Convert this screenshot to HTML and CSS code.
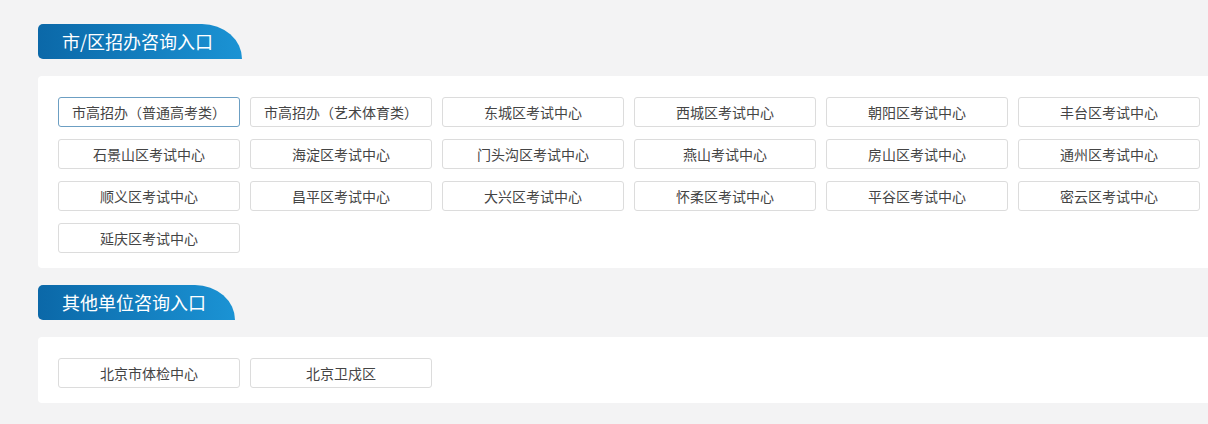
FILE: index.html
```html
<!DOCTYPE html>
<html lang="zh-CN">
<head>
<meta charset="utf-8">
<title>咨询入口</title>
<link rel="stylesheet" href="styles.css">
</head>
<body>
<div class="wrap">
  <div class="tab">市/区招办咨询入口</div>
  <div class="panel">
    <div class="grid">
      <a class="btn active">市高招办（普通高考类）</a>
      <a class="btn">市高招办（艺术体育类）</a>
      <a class="btn">东城区考试中心</a>
      <a class="btn">西城区考试中心</a>
      <a class="btn">朝阳区考试中心</a>
      <a class="btn">丰台区考试中心</a>
      <a class="btn">石景山区考试中心</a>
      <a class="btn">海淀区考试中心</a>
      <a class="btn">门头沟区考试中心</a>
      <a class="btn">燕山考试中心</a>
      <a class="btn">房山区考试中心</a>
      <a class="btn">通州区考试中心</a>
      <a class="btn">顺义区考试中心</a>
      <a class="btn">昌平区考试中心</a>
      <a class="btn">大兴区考试中心</a>
      <a class="btn">怀柔区考试中心</a>
      <a class="btn">平谷区考试中心</a>
      <a class="btn">密云区考试中心</a>
      <a class="btn">延庆区考试中心</a>
    </div>
  </div>
  <div class="tab">其他单位咨询入口</div>
  <div class="panel">
    <div class="grid">
      <a class="btn">北京市体检中心</a>
      <a class="btn">北京卫戍区</a>
    </div>
  </div>
</div>
</body>
</html>
```

FILE: styles.css
```css
html, body {
  margin: 0;
  padding: 0;
  overflow: hidden;
  background: #f3f3f4;
}
body {
  font-family: "Noto Sans CJK SC", "Noto Sans", sans-serif;
  color: #333;
}
.wrap {
  margin-left: 38px;
  padding-top: 24px;
  width: 1190px;
}
.tab {
  display: inline-block;
  height: 35px;
  line-height: 35px;
  padding: 0 29px 0 24px;
  font-size: 18px;
  color: #fff;
  background: linear-gradient(to right, #0b68a8, #1b93d4);
  border-radius: 5px 40px 0 5px / 5px 35px 0 5px;
  margin-bottom: 17px;
}
.panel {
  background: #fff;
  border-radius: 4px;
  padding: 21px 20px 15px;
  margin-bottom: 17px;
}
.grid {
  display: grid;
  grid-template-columns: repeat(6, 182px);
  column-gap: 10px;
  row-gap: 12px;
}
.btn {
  box-sizing: border-box;
  height: 30px;
  line-height: 28px;
  border: 1px solid #dcdcdc;
  border-radius: 3px;
  text-align: center;
  font-size: 14px;
  color: #444;
  background: #fff;
  white-space: nowrap;
}
.btn.active {
  border-color: #6c9fc3;
}
```
